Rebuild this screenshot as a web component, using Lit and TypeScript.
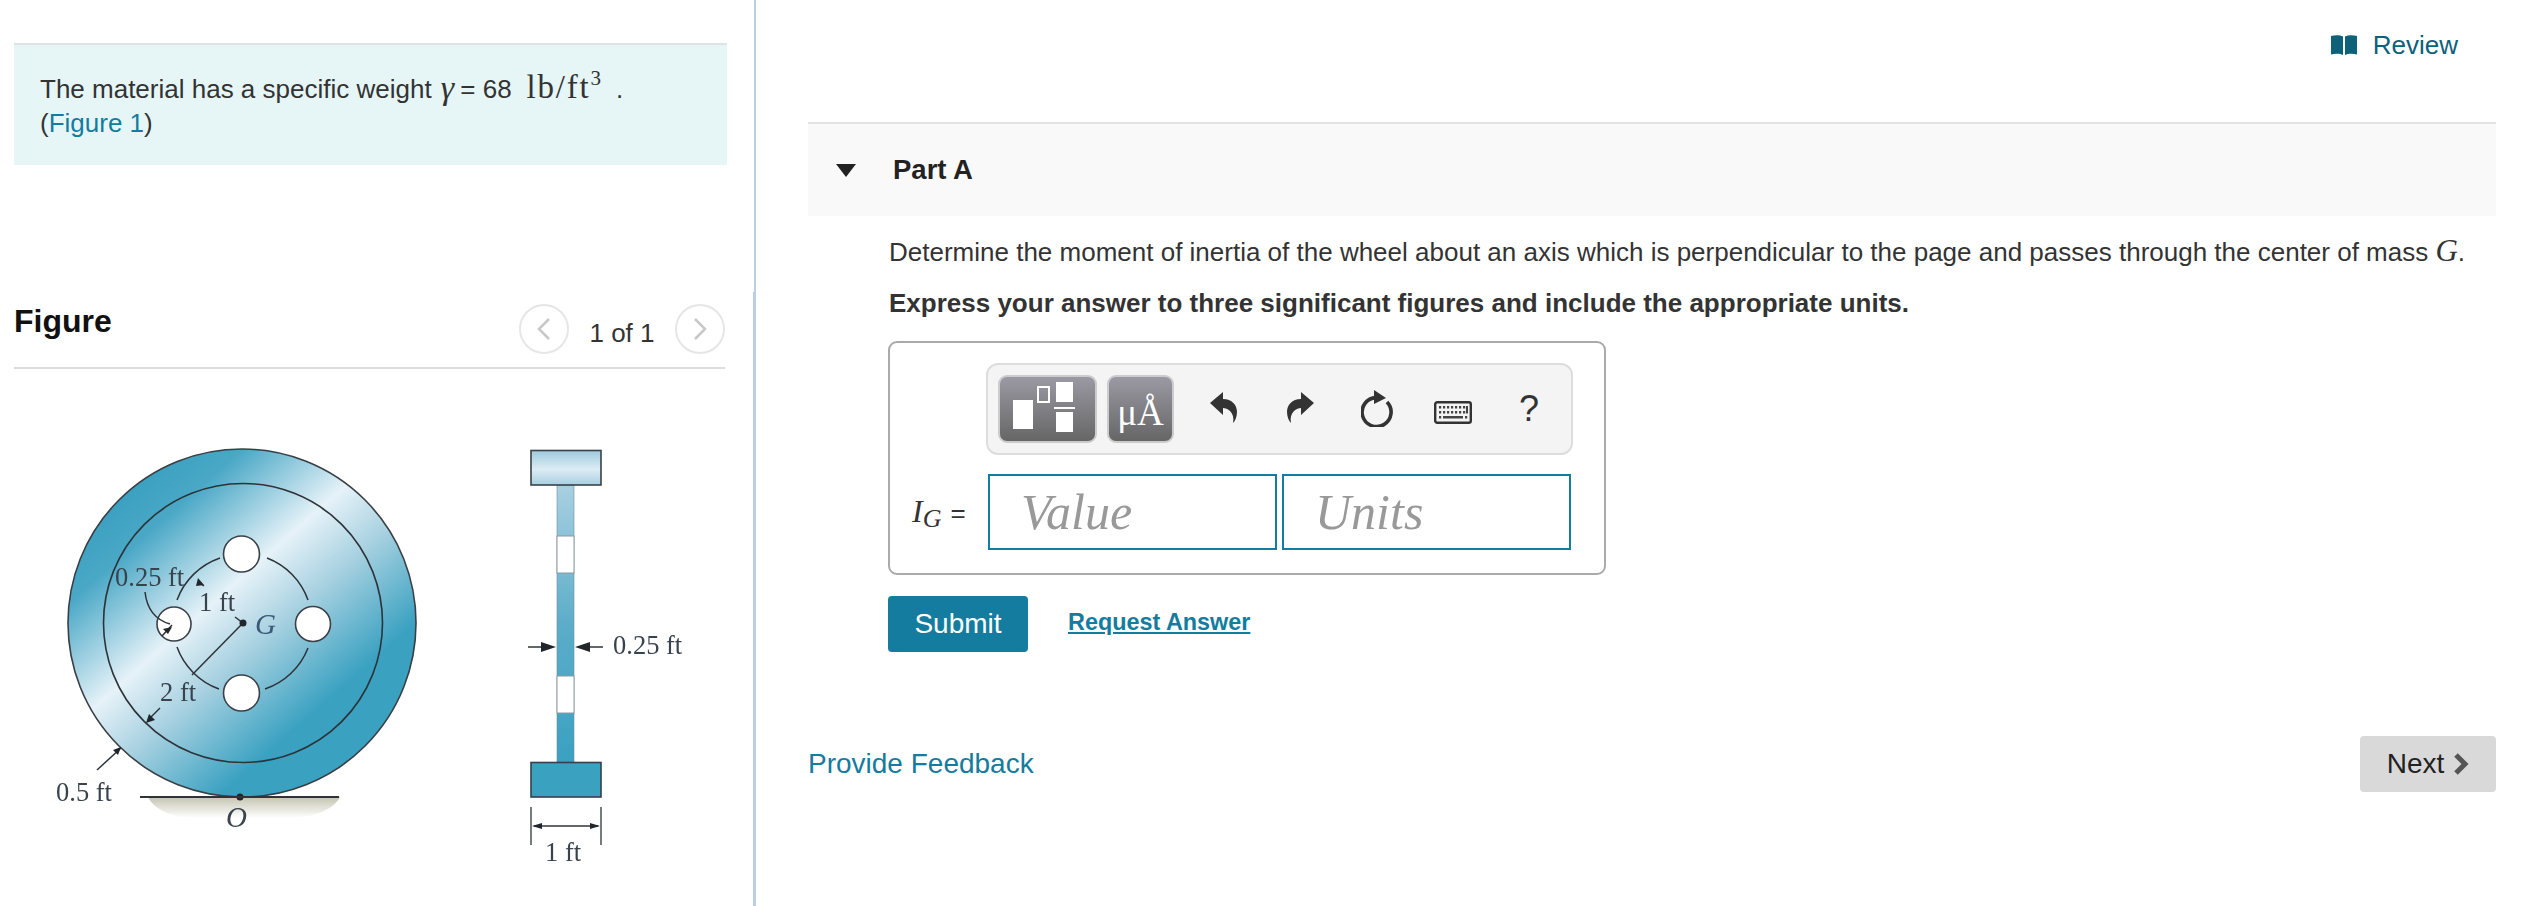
import { LitElement, html, css, svg } from "lit";
import { customElement } from "lit/decorators.js";

const figure = svg`
  <defs>
    <linearGradient id="disc" gradientUnits="userSpaceOnUse" x1="125" y1="490" x2="350" y2="745">
      <stop offset="0" stop-color="#3aa0c0"/>
      <stop offset=".14" stop-color="#4aa8c6"/>
      <stop offset=".42" stop-color="#e6f2f8"/>
      <stop offset=".6" stop-color="#a6d0e0"/>
      <stop offset=".86" stop-color="#3aa1c1"/>
      <stop offset="1" stop-color="#3aa1c1"/>
    </linearGradient>
    <linearGradient id="stem" x1="0" y1="0" x2="0" y2="1">
      <stop offset="0" stop-color="#a9d0e1"/>
      <stop offset=".5" stop-color="#5cadc9"/>
      <stop offset="1" stop-color="#3aa1c1"/>
    </linearGradient>
    <linearGradient id="cap" x1="0" y1="0" x2="0" y2="1">
      <stop offset="0" stop-color="#9fcade"/>
      <stop offset=".55" stop-color="#dcecf4"/>
      <stop offset="1" stop-color="#a7cfe1"/>
    </linearGradient>
    <linearGradient id="ground" x1="0" y1="0" x2="0" y2="1">
      <stop offset="0" stop-color="#c4c4b2"/>
      <stop offset="1" stop-color="#ffffff"/>
    </linearGradient>
  </defs>
  <path d="M148 797H340C335 808 315 818 290 818H195C170 818 153 808 148 797Z" fill="url(#ground)"/>
  <circle cx="242" cy="623" r="174" fill="url(#disc)" stroke="#3a3f44" stroke-width="1.6"/>
  <circle cx="243" cy="623" r="139.5" fill="none" stroke="#2d3338" stroke-width="1.6"/>
  <g fill="#fff" stroke="#3a4248" stroke-width="1.6">
    <circle cx="241.500" cy="554" r="18"/>
    <circle cx="174" cy="624" r="17"/>
    <circle cx="313" cy="624" r="17.500"/>
    <circle cx="241.500" cy="693" r="18"/>
  </g>
  <g fill="none" stroke="#2d3338" stroke-width="1.5">
    <path d="M220 558A70 70 0 0 0 177 600"/>
    <path d="M267 558A70 70 0 0 1 308 600"/>
    <path d="M308 648A70 70 0 0 1 265 689"/>
    <path d="M177 647A70 70 0 0 0 219 689"/>
    <path d="M243 623L192 675"/>
    <path d="M235 617L243 623"/>
    <path d="M160 708L148 720"/>
    <path d="M121 748L97 770"/>
    <path d="M145 592C147 610 156 620 170 624"/>
    <path d="M172 625L162 636"/>
    <path d="M198 582L204 586"/>
  </g>
  <g fill="#20262a">
    <circle cx="243" cy="623" r="3.500"/>
    <path d="M198 578L196 586L204 585Z"/>
    <path d="M146 723L149 714L155 720Z"/>
    <path d="M121 747L118 755L113 750Z"/>
    <path d="M172 627L163 629L168 634Z"/>
    <circle cx="240" cy="797" r="3.500"/>
  </g>
  <path d="M140 797H339" stroke="#30343a" stroke-width="2"/>
  <g font-family="'Liberation Serif', serif" font-size="26.500" fill="#39434d">
    <text x="115" y="586">0.25 ft</text>
    <text x="199" y="611">1 ft</text>
    <text x="160" y="701">2 ft</text>
    <text x="56" y="801">0.5 ft</text>
    <text x="613" y="654">0.25 ft</text>
    <text x="545" y="861">1 ft</text>
    <text x="255" y="634" font-style="italic" fill="#3b5a78" font-size="29">G</text>
    <text x="226" y="827" font-style="italic" font-size="29">O</text>
  </g>
  <rect x="557" y="485" width="17" height="277" fill="url(#stem)" stroke="#6f8d9a" stroke-width=".6"/>
  <rect x="557" y="536" width="17" height="37" fill="#fff" stroke="#8a9aa2" stroke-width="1"/>
  <rect x="557" y="676" width="17" height="37" fill="#fff" stroke="#8a9aa2" stroke-width="1"/>
  <rect x="531" y="450.500" width="70" height="34.500" fill="url(#cap)" stroke="#3a4248" stroke-width="1.600"/>
  <rect x="531" y="762.500" width="70" height="34.500" fill="#3aa1c1" stroke="#33424a" stroke-width="1.600"/>
  <g fill="none" stroke="#30363b" stroke-width="1.300">
    <path d="M528 647H552M579 647H603"/>
    <path d="M531 807V845M601 807V845"/>
    <path d="M534 826H598"/>
  </g>
  <g fill="#20262a">
    <path d="M556 647L541 642V652Z"/>
    <path d="M575 647L590 642V652Z"/>
    <path d="M532 826L542 823V829Z"/>
    <path d="M600 826L590 823V829Z"/>
  </g>
`;

const undo = svg`<path d="M0 11L13 0V7C22 7 27 13 27 20C27 25 25 29 23 31C24 26 23 22 20 19C18 17 15 16 13 16V23Z" fill="#333"/>`;

const keys = [6, 10, 14, 18, 22, 26, 30];

@customElement("app-root")
export class AppRoot extends LitElement {
  static styles = css`
    :host {
      display: block;
      width: 2530px;
      height: 906px;
      overflow: hidden;
      background: #fff;
      font-family: "Liberation Sans", Arial, sans-serif;
      font-size: 26px;
      color: #333;
    }
    a { color: #147c9e; text-decoration: none; }
    .page { display: flex; height: 906px; }
    .left { width: 753px; flex: none; padding-left: 14px; box-sizing: border-box; }
    .divider { width: 3px; flex: none; display: flex; flex-direction: column; align-items: flex-end; }
    .div-top { width: 2px; height: 292px; background: #bccfe0; }
    .div-bottom { width: 3px; flex: 1; background: #bccfe0; }
    .intro {
      margin-top: 43px; width: 713px; height: 122px; box-sizing: border-box;
      background: #e6f6f7; border-top: 2px solid #dfe3e4;
      padding: 27px 0 0 26px; line-height: 34px; color: #333;
    }
    .intro i.gamma { font-family: "Liberation Serif", serif; font-size: 34px; line-height: 0; margin: 0 6px 0 2px; vertical-align: -1px; }
    .unit { font-family: "Liberation Serif", serif; font-size: 33px; line-height: 0; margin: 0 13px 0 15px; letter-spacing: 1.8px; }
    .unit sup { font-size: 21px; line-height: 0; vertical-align: 13px; }
    .fig-head {
      margin-top: 126px; width: 711px; height: 78px; box-sizing: border-box;
      border-bottom: 2px solid #ddd; display: flex; align-items: flex-start;
    }
    .fig-title { font-size: 32px; font-weight: 700; color: #111; line-height: 36px; margin-top: 12px; flex: 1; }
    .pager { display: flex; align-items: center; margin-top: 13px; }
    .round {
      width: 50px; height: 50px; box-sizing: border-box; border-radius: 50%;
      border: 2px solid #e6e6e6; display: flex; align-items: center; justify-content: center;
    }
    .count { width: 106px; text-align: center; font-size: 26px; color: #333; margin-top: 8px; }
    .figure { display: block; width: 739px; height: 535px; filter: blur(.45px); margin: 2px 0 0 -14px; }

    .right { flex: 1; padding: 0 34px 0 52px; min-width: 0; }
    .review-row { height: 122px; box-sizing: border-box; padding: 30px 38px 0 0; display: flex; justify-content: flex-end; align-items: flex-start; }
    .review { display: flex; align-items: center; gap: 16px; line-height: 30px; }
    .review-link { color: #0d6179; }
    .bar {
      height: 94px; box-sizing: border-box; background: #f9f9f9; border-top: 2px solid #e2e2e2;
      display: flex; align-items: center; padding-left: 28px;
    }
    .tri { width: 0; height: 0; border-left: 10px solid transparent; border-right: 10px solid transparent; border-top: 13px solid #222; }
    .part { margin-left: 37px; font-weight: 700; font-size: 27.500px; color: #222; }
    .body { padding-left: 80px; }
    .q { margin: 18.500px 0 0 1px; line-height: 32px; white-space: nowrap; }
    .q i { font-family: "Liberation Serif", serif; font-size: 31px; }
    .hint { margin: 19px 0 0 1px; line-height: 32px; font-weight: 700; }
    .answer {
      margin-top: 22px; width: 718px; height: 234px; box-sizing: border-box;
      border: 2px solid #aaa; border-radius: 9px; padding: 20px 0 0 96px;
    }
    .toolbar {
      width: 587px; height: 92px; box-sizing: border-box; background: #f4f4f4;
      border: 2px solid #ddd; border-radius: 12px; display: flex; align-items: flex-start; padding: 10px 0 0 10px;
    }
    .tb {
      height: 68px; box-sizing: border-box; border: 2px solid #ccc; border-radius: 9px;
      background: linear-gradient(#9b99a3, #666); flex: none;
    }
    .tb1 { width: 99px; margin-right: 10px; }
    .tb2 {
      width: 67px; color: #fff; font-family: "Liberation Serif", serif; font-size: 37px;
      display: flex; align-items: flex-end; justify-content: center; line-height: 50px; padding-bottom: 3px;
    }
    .tb svg { display: block; }
    .ic { display: block; flex: none; }
    .ic-undo { margin: 17px 0 0 36px; }
    .ic-redo { margin: 17px 0 0 50px; }
    .ic-reload { margin: 15px 0 0 47px; }
    .ic-keys { margin: 26px 0 0 40px; }
    .help { margin: 12px 0 0 47px; font-size: 36px; line-height: 44px; color: #333; }
    .entry { display: flex; align-items: center; margin-top: 19px; margin-left: -94px; }
    .label { width: 96px; box-sizing: border-box; padding-left: 20px; font-size: 26px; white-space: nowrap; }
    .label i { font-family: "Liberation Serif", serif; font-size: 32px; }
    .label sub { font-family: "Liberation Serif", serif; font-style: italic; font-size: 26px; line-height: 0; vertical-align: -5px; margin-right: 9px; }
    .field {
      width: 289px; height: 76px; box-sizing: border-box; border: 2px solid #147c9e;
      font-family: "Liberation Serif", serif; font-style: italic; font-size: 50px; color: #999;
      padding-left: 31px; display: flex; align-items: center;
    }
    .field + .field { margin-left: 5px; }
    .actions { display: flex; align-items: center; margin-top: 21px; }
    .submit {
      width: 140px; height: 56px; border-radius: 4px; background: #147c9e; color: #fff;
      font-size: 28px; display: flex; align-items: center; justify-content: center;
    }
    .request { margin-left: 40px; font-size: 23.400px; font-weight: 700; text-decoration: underline; margin-top: -2px; }
    .foot { display: flex; justify-content: space-between; align-items: center; margin-top: 84px; }
    .feedback { font-size: 28px; }
    .next {
      width: 136px; height: 56px; border-radius: 4px; background: #d9d9d9; color: #222;
      font-size: 28px; display: flex; align-items: center; justify-content: center; gap: 9px;
    }
  `;

  render() {
    return html`
      <div class="page">
        <section class="left">
          <div class="intro">
            The material has a specific weight <i class="gamma">γ</i>= 68<span class="unit">lb/ft<sup>3</sup></span>.<br />
            (<a href="#">Figure 1</a>)
          </div>
          <div class="fig-head">
            <div class="fig-title">Figure</div>
            <div class="pager">
              <span class="round">
                <svg width="16" height="24" viewBox="0 0 16 24"><path d="M13 2L3 12L13 22" fill="none" stroke="#c8c8c8" stroke-width="2.500"/></svg>
              </span>
              <span class="count">1 of 1</span>
              <span class="round">
                <svg width="16" height="24" viewBox="0 0 16 24"><path d="M3 2L13 12L3 22" fill="none" stroke="#c8c8c8" stroke-width="2.500"/></svg>
              </span>
            </div>
          </div>
          <svg class="figure" viewBox="0 371 739 535">${figure}</svg>
        </section>
        <div class="divider"><div class="div-top"></div><div class="div-bottom"></div></div>
        <main class="right">
          <div class="review-row">
            <a class="review review-link" href="#">
              <svg width="26" height="20" viewBox="0 0 26 20"><path d="M0 1C4 0 9 0 12 1.500V20C9 18.500 4 18.500 0 19.500ZM14 1.500C17 0 22 0 26 1V19.500C22 18.500 17 18.500 14 20Z" fill="#0d6179"/></svg>
              Review
            </a>
          </div>
          <div class="bar"><span class="tri"></span><span class="part">Part A</span></div>
          <div class="body">
            <p class="q">Determine the moment of inertia of the wheel about an axis which is perpendicular to the page and passes through the center of mass <i>G</i>.</p>
            <p class="hint">Express your answer to three significant figures and include the appropriate units.</p>
            <div class="answer">
              <div class="toolbar">
                <div class="tb tb1">
                  <svg width="95" height="64" viewBox="0 0 95 64">
                    <rect x="13" y="23" width="20" height="29" fill="#fff"/>
                    <rect x="38" y="10" width="11" height="15" fill="none" stroke="#fff" stroke-width="2"/>
                    <rect x="56" y="5" width="17" height="20" fill="#fff"/>
                    <rect x="54" y="30" width="21" height="2" fill="#fff"/>
                    <rect x="56" y="35" width="17" height="20" fill="#fff"/>
                  </svg>
                </div>
                <div class="tb tb2">μÅ</div>
                <svg class="ic ic-undo" width="27" height="31" viewBox="0 0 27 31">${undo}</svg>
                <svg class="ic ic-redo" width="27" height="31" viewBox="0 0 27 31"><g transform="translate(27 0) scale(-1 1)">${undo}</g></svg>
                <svg class="ic ic-reload" width="33" height="37" viewBox="0 0 33 37">
                  <path d="M26 12A14.500 14.500 0 1 1 15 7.600" fill="none" stroke="#333" stroke-width="3.600"/>
                  <path d="M13 0L25 8L13 14Z" fill="#333"/>
                </svg>
                <svg class="ic ic-keys" width="38" height="23" viewBox="0 0 38 23">
                  <rect x="1.200" y="1.200" width="35.600" height="20.600" rx="2" fill="#f4f4f4" stroke="#333" stroke-width="2.400"/>
                  ${keys.map((x) => svg`<rect x=${x - 1} y="5" width="2.200" height="2.500" fill="#444"/><rect x=${x - 1} y="10" width="2.200" height="2.500" fill="#444"/>`)}
                  <rect x="32" y="5" width="2" height="7.500" fill="#444"/>
                  <rect x="5" y="15" width="2.200" height="2.500" fill="#444"/>
                  <rect x="9" y="15" width="20" height="2.500" fill="#444"/>
                  <rect x="31" y="15" width="2.200" height="2.500" fill="#444"/>
                </svg>
                <span class="help">?</span>
              </div>
              <div class="entry">
                <span class="label"><i>I</i><sub>G</sub>=</span>
                <span class="field">Value</span>
                <span class="field">Units</span>
              </div>
            </div>
            <div class="actions">
              <span class="submit">Submit</span>
              <a class="request" href="#">Request Answer</a>
            </div>
          </div>
          <div class="foot">
            <a class="feedback" href="#">Provide Feedback</a>
            <span class="next">Next
              <svg width="16" height="24" viewBox="0 0 16 24"><path d="M3 3L12 12L3 21" fill="none" stroke="#555" stroke-width="5"/></svg>
            </span>
          </div>
        </main>
      </div>
    `;
  }
}
